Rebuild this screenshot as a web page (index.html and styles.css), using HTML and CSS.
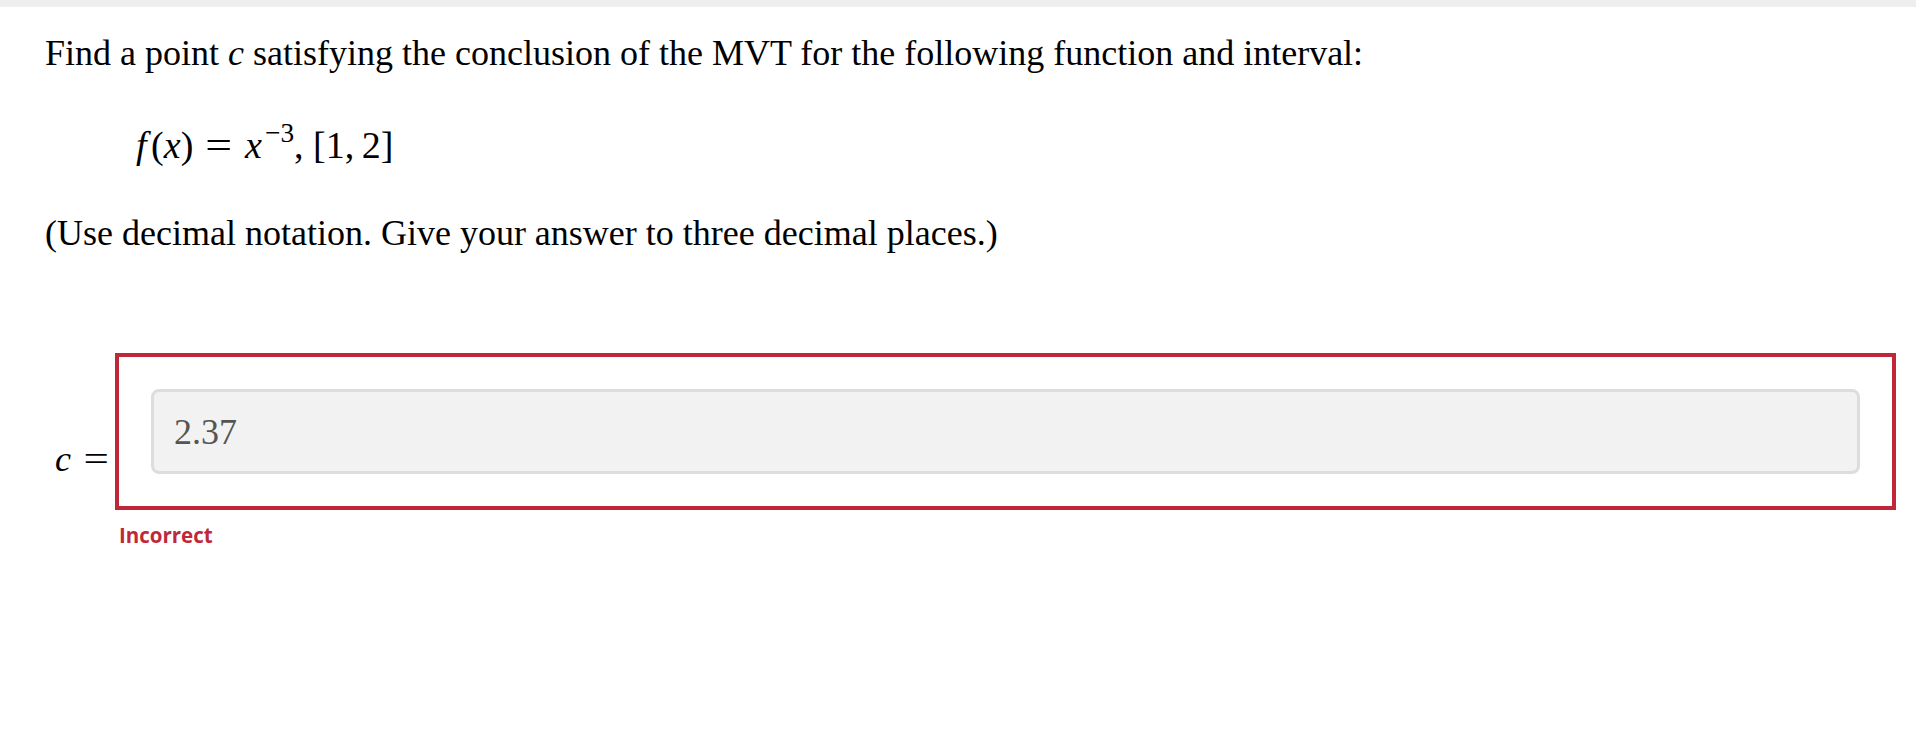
FILE: index.html
```html
<!DOCTYPE html>
<html lang="en">
<head>
    <meta charset="UTF-8">
    <meta name="viewport" content="width=device-width, initial-scale=1.0">
    <title>Mean Value Theorem</title>
    <link rel="stylesheet" href="styles.css">
</head>
<body>
    <div class="topbar"></div>
    <div class="question">
        <p class="prompt">Find a point <i class="mi">c</i> satisfying the conclusion of the MVT for the following function and interval:</p>

        <p class="formula"><i class="mi fn">f</i>(<i class="mi">x</i>)<span class="op">=</span><i class="mi">x</i><sup>−3</sup>, [1,<span class="thin"></span>2]</p>

        <p class="note">(Use decimal notation. Give your answer to three decimal places.)</p>

        <div class="answer-row">
            <span class="answer-label"><i class="mi">c</i><span class="op">=</span></span>
            <div class="answer-box incorrect">
                <input class="answer-input" type="text" value="2.37" readonly>
            </div>
        </div>
        <div class="feedback">Incorrect</div>
    </div>
</body>
</html>
```

FILE: styles.css
```css
body {
    margin: 0;
    padding: 0;
    background-color: #ffffff;
    color: #000000;
    font-family: 'Liberation Serif', 'Times New Roman', serif;
}
.topbar {
    height: 7px;
    background-color: #eeeeee;
}
.question {
    padding: 24px 20px 0 45px;
}
p {
    margin: 0;
    font-size: 36px;
    line-height: 44px;
}
.mi {
    font-style: italic;
}
.op {
    display: inline-block;
    margin: 0 0.4em;
    transform: scaleX(1.25);
}
.formula {
    margin-top: 48px;
    padding-left: 91px;
    font-size: 38px;
}
.formula .fn {
    margin-right: 0.12em;
}
.formula .thin {
    display: inline-block;
    width: 0.2em;
}
.formula sup {
    font-size: 0.72em;
    line-height: 0;
    vertical-align: 0.6em;
    margin-left: 3px;
}
.note {
    margin-top: 44px;
}
.answer-row {
    display: flex;
    align-items: flex-end;
    margin-top: 98px;
}
.answer-label {
    width: 70px;
    padding-left: 10px;
    box-sizing: border-box;
    font-size: 36px;
    line-height: 44px;
    margin-bottom: 29px;
    white-space: nowrap;
}
.answer-label .op {
    margin: 0 0 0 0.42em;
}
.answer-box {
    flex: 1;
    border: 4px solid #c0283a;
    padding: 32px;
}
.answer-input {
    display: block;
    width: 100%;
    box-sizing: border-box;
    height: 85px;
    margin: 0;
    padding: 0 20px;
    border: 3px solid #dddddd;
    border-radius: 8px;
    background-color: #f2f2f2;
    color: #555555;
    font-family: 'Liberation Serif', 'Times New Roman', serif;
    font-size: 36px;
    outline: none;
}
.feedback {
    margin: 11px 0 0 74px;
    font-family: 'Open Sans', sans-serif;
    font-weight: bold;
    font-size: 20.5px;
    color: #c0283a;
}
```
